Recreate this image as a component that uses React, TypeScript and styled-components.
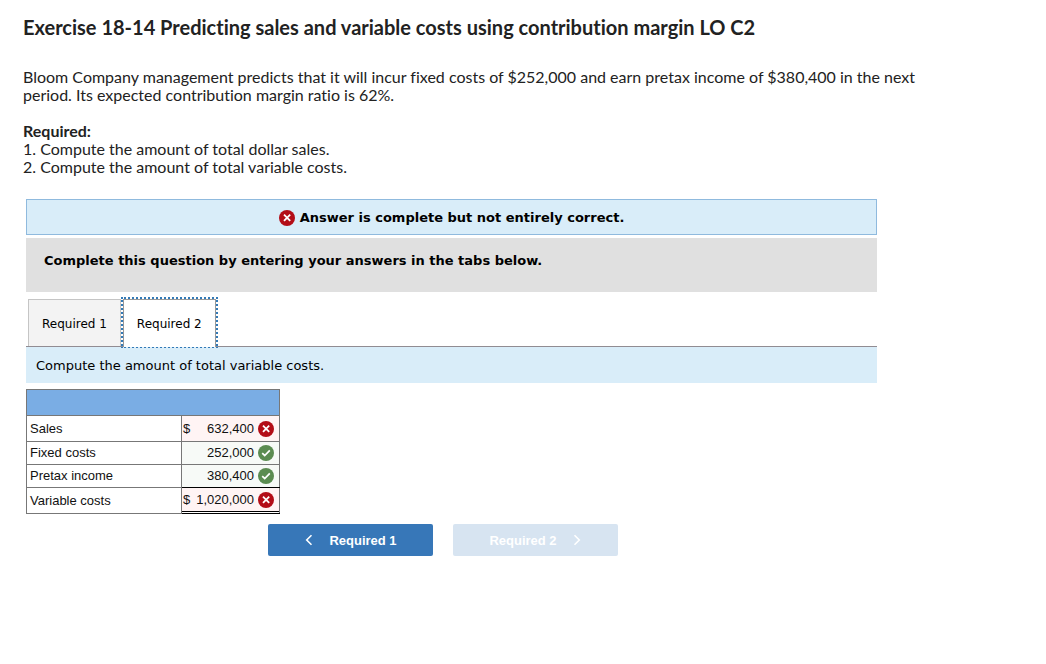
import React from "react";
import styled, { createGlobalStyle } from "styled-components";

const GlobalStyle = createGlobalStyle`
  body {
    margin: 0;
    background: #fff;
    color: #222;
    font-family: Lato, "Liberation Sans", sans-serif;
    font-variant-ligatures: none;
  }
  *, *::before, *::after { box-sizing: border-box; }
`;

const Page = styled.main`
  max-width: 948px;
  padding: 15px 24px 24px 23px;
`;

const Title = styled.h1`
  margin: 0;
  font-size: 20px;
  line-height: 24px;
  font-weight: 700;
`;

const Prompt = styled.section`
  margin-top: 29px;
  font-size: 16px;
  line-height: 18px;

  p { margin: 0 0 18px; }
  h2 { margin: 0; font-size: 16px; line-height: 18px; font-weight: 700; }
`;

const Tasks = styled.ol`
  margin: 0;
  padding: 0;
  list-style-type: none;
`;

const Worksheet = styled.section`
  max-width: 851px;
  margin: 23px 0 0 3px;
  color: #000;
  font-family: "DejaVu Sans", sans-serif;
  font-size: 13px;
  line-height: 18px;
`;

const Verdict = styled.div`
  display: flex;
  align-items: center;
  justify-content: center;
  gap: 5px;
  height: 36px;
  padding-top: 2px;
  border: 1px solid #8fbade;
  background: #d9edf9;
  font-weight: 700;
`;

const Instruction = styled.div`
  margin-top: 3px;
  padding: 14px 18px 22px;
  background: #e0e0e0;
  font-weight: 700;
`;

const TabList = styled.div`
  position: relative;
  z-index: 1;
  display: flex;
  align-items: flex-start;
  gap: 2px;
  margin: 3px 0 -2px;
  padding: 4px 2px 1px;
  overflow: hidden;
`;

const Tab = styled.button<{ $active?: boolean }>`
  height: ${(p) => (p.$active ? 48 : 47)}px;
  padding: ${(p) => (p.$active ? 0 : 2)}px 13px 0;
  border: 1px solid ${(p) => (p.$active ? "#999" : "#c5c5c5")};
  border-bottom: 0;
  background: ${(p) => (p.$active ? "#fff" : "#f3f3f3")};
  color: #000;
  font-family: "DejaVu Sans", sans-serif;
  font-size: 12px;
  outline: ${(p) => (p.$active ? "2px dotted #337ab7" : "none")};
`;

const TabPanel = styled.div`
  padding: 10px 10px 8px;
  border-top: 1px solid #918c92;
  background: #d9edf9;
`;

const Ledger = styled.table`
  width: 254px;
  margin-top: 6px;
  border-collapse: collapse;
  table-layout: fixed;
  color: #111;
  font-family: "Liberation Sans", sans-serif;
  font-size: 13px;
  line-height: 16px;
`;

const LabelColumn = styled.col`
  width: 155px;
`;

const HeadCell = styled.th`
  height: 26px;
  padding: 0;
  border: 1px solid #777;
  background: #7aade4;
`;

const Label = styled.th`
  padding: 0 3px;
  border: 1px solid #777;
  font-weight: 400;
  text-align: left;
`;

const Value = styled.td<{ $ok: boolean; $rule?: "single" | "double" }>`
  padding: 0 5px ${(p) => (p.$rule === "double" ? 2 : 0)}px 1px;
  border: 1px solid #777;
  border-bottom-color: ${(p) => (p.$rule ? "#000" : "#777")};
  background: ${(p) => (p.$ok ? "#f7faf7" : "#fff4f4")};
  box-shadow: ${(p) =>
    p.$rule === "double" ? "inset 0 -1px #fff, inset 0 -2px #000" : "none"};
`;

const Row = styled.tr<{ $tall?: boolean }>`
  height: ${(p) => (p.$tall ? 26 : 23)}px;
`;

const Amount = styled.div`
  display: flex;
  align-items: center;
  gap: 4px;

  span:nth-child(2) { margin-left: auto; }
`;

const Pager = styled.nav`
  display: flex;
  gap: 20px;
  margin: 10px 0 0 242px;
`;

const PagerButton = styled.button`
  display: flex;
  align-items: center;
  justify-content: center;
  gap: 15px;
  width: 165px;
  height: 32px;
  padding: 0;
  border: 0;
  border-radius: 2px;
  background: #3777b8;
  color: #fff;
  font-family: "Liberation Sans", sans-serif;
  font-size: 13px;
  font-weight: 700;

  &:disabled { background: #d7e4f1; }
`;

const Mark = ({ ok }: { ok: boolean }) => (
  <svg width="16" height="16" viewBox="0 0 16 16" role="img" aria-label={ok ? "Correct" : "Incorrect"}>
    <circle cx="8" cy="8" r="8" fill={ok ? "#5b8c51" : "#b30d17"} />
    {ok ? (
      <path d="M4.2 8.2 6.7 10.5 11.8 5.4" fill="none" stroke="#fff" strokeWidth="1.7" />
    ) : (
      <path d="M5 4.7 11.2 10.9M11.2 4.7 5 10.9" fill="none" stroke="#fff" strokeWidth="1.8" />
    )}
  </svg>
);

const Chevron = ({ right }: { right?: boolean }) => (
  <svg width="10" height="12" viewBox="0 0 10 12" aria-hidden="true">
    <path d={right ? "M2.5 1.2 7.3 6 2.5 10.8" : "M7.5 1.2 2.7 6 7.5 10.8"} fill="none" stroke="#fff" strokeWidth="1.6" />
  </svg>
);

type Entry = {
  label: string;
  amount: string;
  ok: boolean;
  dollar?: boolean;
  rule?: "single" | "double";
};

const entries: Entry[] = [
  { label: "Sales", amount: "632,400", ok: false, dollar: true },
  { label: "Fixed costs", amount: "252,000", ok: true },
  { label: "Pretax income", amount: "380,400", ok: true, rule: "single" },
  { label: "Variable costs", amount: "1,020,000", ok: false, dollar: true, rule: "double" },
];

export default function App() {
  return (
    <>
      <GlobalStyle />
      <Page>
        <Title>Exercise 18-14 Predicting sales and variable costs using contribution margin LO C2</Title>
        <Prompt>
          <p>
            Bloom Company management predicts that it will incur fixed costs of $252,000 and earn
            pretax income of $380,400 in the next period. Its expected contribution margin ratio is 62%.
          </p>
          <h2>Required:</h2>
          <Tasks>
            <li>1. Compute the amount of total dollar sales.</li>
            <li>2. Compute the amount of total variable costs.</li>
          </Tasks>
        </Prompt>
        <Worksheet>
          <Verdict>
            <Mark ok={false} />
            <span>Answer is complete but not entirely correct.</span>
          </Verdict>
          <Instruction>Complete this question by entering your answers in the tabs below.</Instruction>
          <TabList role="tablist">
            <Tab type="button" role="tab" id="tab-1" aria-selected={false}>Required 1</Tab>
            <Tab type="button" role="tab" id="tab-2" aria-selected aria-controls="panel-2" $active>Required 2</Tab>
          </TabList>
          <TabPanel role="tabpanel" id="panel-2" aria-labelledby="tab-2">
            Compute the amount of total variable costs.
          </TabPanel>
          <Ledger>
            <colgroup>
              <LabelColumn />
              <col />
            </colgroup>
            <thead>
              <tr>
                <HeadCell colSpan={2} />
              </tr>
            </thead>
            <tbody>
              {entries.map((e) => (
                <Row key={e.label} $tall={e.dollar}>
                  <Label scope="row">{e.label}</Label>
                  <Value $ok={e.ok} $rule={e.rule}>
                    <Amount>
                      <span>{e.dollar ? "$" : ""}</span>
                      <span>{e.amount}</span>
                      <Mark ok={e.ok} />
                    </Amount>
                  </Value>
                </Row>
              ))}
            </tbody>
          </Ledger>
          <Pager aria-label="Required steps">
            <PagerButton type="button">
              <Chevron />
              Required 1
            </PagerButton>
            <PagerButton type="button" disabled>
              Required 2
              <Chevron right />
            </PagerButton>
          </Pager>
        </Worksheet>
      </Page>
    </>
  );
}
